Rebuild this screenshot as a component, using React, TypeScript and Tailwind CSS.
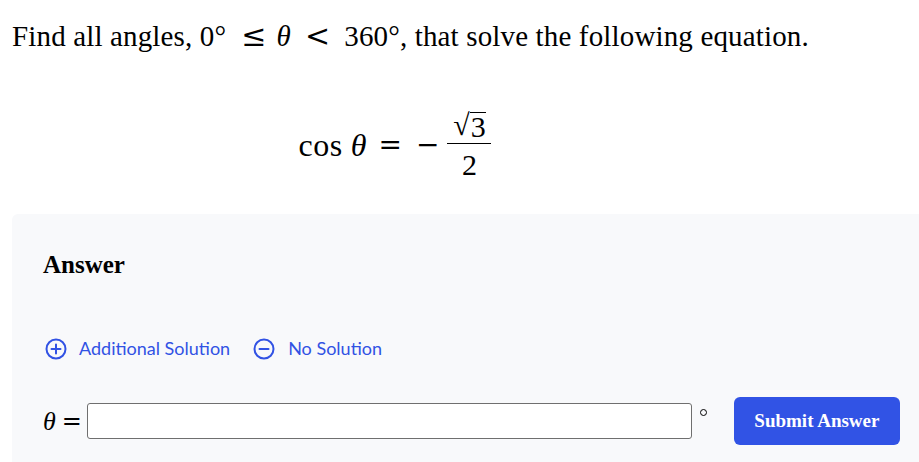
import React from "react";

const serif = { fontFamily: '"Liberation Serif", "DejaVu Serif", serif' };
const rel = { fontFamily: '"DejaVu Serif", "Liberation Serif", serif' };

function PlusCircle() {
  return (
    <svg width="22" height="22" viewBox="0 0 22 22" fill="none">
      <circle cx="11" cy="11" r="9.5" stroke="#3152e4" strokeWidth="2" />
      <path d="M11 6.5v9M6.5 11h9" stroke="#3152e4" strokeWidth="2" strokeLinecap="round" />
    </svg>
  );
}

function MinusCircle() {
  return (
    <svg width="22" height="22" viewBox="0 0 22 22" fill="none">
      <circle cx="11" cy="11" r="9.5" stroke="#3152e4" strokeWidth="2" />
      <path d="M6.5 11h9" stroke="#3152e4" strokeWidth="2" strokeLinecap="round" />
    </svg>
  );
}

export default function App() {
  return (
    <div className="w-[919px] h-[462px] overflow-hidden bg-white text-black" style={serif}>
      <div className="pl-[12px] pt-[16px]">
        <p className="text-[29px] leading-[40px] tracking-[0.15px] whitespace-nowrap">
          Find all angles,{" "}
          <span className="inline-block">0°</span>
          <span className="inline-block ml-[15px] text-[30px]" style={rel}>≤</span>
          <i className="inline-block ml-[10px]">θ</i>
          <span className="inline-block ml-[14px] text-[30px]" style={rel}>&lt;</span>
          <span className="inline-block ml-[14px]">360°</span>, that solve the following equation.
        </p>
        <div className="w-[766px] flex justify-center mt-[42px] h-[86px]">
          <div className="flex items-center text-[32px] pt-[8px]">
            <span className="tracking-[0.5px]">cos</span>
            <i className="ml-[8px]">θ</i>
            <span className="ml-[12px] text-[28px]" style={rel}>=</span>
            <span className="ml-[14px] text-[28px]" style={rel}>−</span>
            <span className="ml-[8px] flex flex-col items-center leading-none text-[30px]">
              <span className="flex items-end pb-[3px]">
                <span className="text-[30px] leading-[30px]">√</span>
                <span className="border-t-[1.5px] border-black leading-[27px] pl-[1px]">3</span>
              </span>
              <span className="w-[44px] border-t-[1.5px] border-black"></span>
              <span className="pt-[6px]">2</span>
            </span>
          </div>
        </div>
        <div className="mt-[30px] bg-[#f8f9fb] rounded-tl-[6px] h-[260px] pl-[31px] pt-[36px]">
          <h2 className="text-[25px] font-bold leading-[30px]">Answer</h2>
          <div
            className="flex items-center mt-[55px] text-[18px] text-[#3152e4]"
            style={{ fontFamily: 'Lato, "Noto Sans", sans-serif' }}
          >
            <button className="flex items-center gap-[12px]">
              <span className="ml-[2px]"><PlusCircle /></span>
              <span>Additional Solution</span>
            </button>
            <button className="flex items-center gap-[13px] ml-[23px]">
              <MinusCircle />
              <span>No Solution</span>
            </button>
          </div>
          <div className="flex items-center mt-[35px]">
            <span className="text-[26px] flex items-center">
              <i>θ</i>
              <span className="ml-[6px] text-[24px]" style={rel}>=</span>
            </span>
            <input
              className="ml-[5px] w-[605px] h-[36px] bg-white border border-[#6f6f6f] rounded-[3px] outline-none"
              type="text"
            />
            <span className="self-start mt-[12px] ml-[8px] w-[7px] h-[7px] rounded-full border border-black"></span>
            <button className="ml-[27px] w-[166px] h-[48px] rounded-[6px] bg-[#3153e5] text-white text-[19px] font-bold">
              Submit Answer
            </button>
          </div>
        </div>
      </div>
    </div>
  );
}
